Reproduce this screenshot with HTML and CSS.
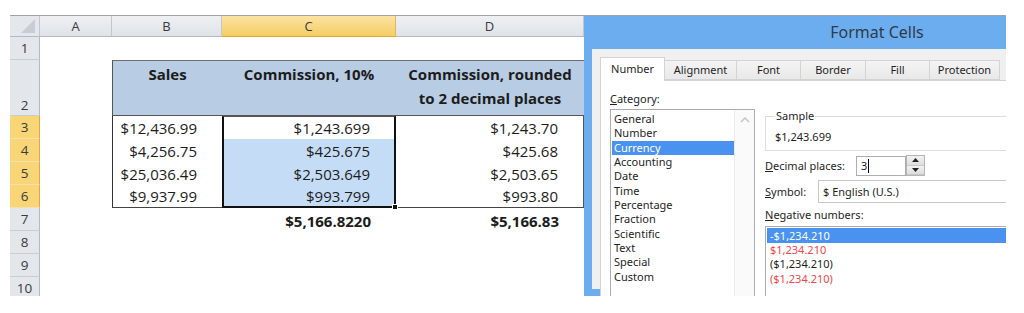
FILE: index.html
```html
<!DOCTYPE html>
<html lang="en">
<head>
    <meta charset="UTF-8">
    <title>Commission - Format Cells</title>
    <link rel="stylesheet" href="styles.css">
</head>
<body>
    <div class="shot">
        <div class="sheet">
            <div class="corner">
                <svg width="16" height="16" viewBox="0 0 16 16"><polygon points="15,1 15,15 1,15" fill="#c9cdd3"/></svg>
            </div>
            <div class="colhead">A</div>
            <div class="colhead">B</div>
            <div class="colhead colhead-on">C</div>
            <div class="colhead">D</div>

            <div class="rowhead">1</div>
            <div class="cell"></div><div class="cell"></div><div class="cell"></div><div class="cell"></div>

            <div class="rowhead rowhead-tall">2</div>
            <div class="cell"></div>
            <div class="cell th th-first">Sales</div>
            <div class="cell th">Commission, 10%</div>
            <div class="cell th">Commission, rounded<br>to 2 decimal places</div>

            <div class="rowhead rowhead-on">3</div>
            <div class="cell"></div>
            <div class="cell num col-b">$12,436.99</div>
            <div class="cell num col-c sel-top">$1,243.699</div>
            <div class="cell num col-d">$1,243.70</div>

            <div class="rowhead rowhead-on">4</div>
            <div class="cell"></div>
            <div class="cell num col-b">$4,256.75</div>
            <div class="cell num col-c picked">$425.675</div>
            <div class="cell num col-d">$425.68</div>

            <div class="rowhead rowhead-on">5</div>
            <div class="cell"></div>
            <div class="cell num col-b">$25,036.49</div>
            <div class="cell num col-c picked">$2,503.649</div>
            <div class="cell num col-d">$2,503.65</div>

            <div class="rowhead rowhead-on">6</div>
            <div class="cell"></div>
            <div class="cell num col-b last">$9,937.99</div>
            <div class="cell num col-c picked sel-bottom">$993.799<span class="handle"></span></div>
            <div class="cell num col-d last">$993.80</div>

            <div class="rowhead">7</div>
            <div class="cell"></div><div class="cell"></div>
            <div class="cell num total">$5,166.8220</div>
            <div class="cell num total">$5,166.83</div>

            <div class="rowhead">8</div>
            <div class="cell"></div><div class="cell"></div><div class="cell"></div><div class="cell"></div>
            <div class="rowhead">9</div>
            <div class="cell"></div><div class="cell"></div><div class="cell"></div><div class="cell"></div>
            <div class="rowhead">10</div>
            <div class="cell"></div><div class="cell"></div><div class="cell"></div><div class="cell"></div>
        </div>

        <div class="dialog">
            <div class="titlebar">Format Cells</div>
            <div class="frame">
                <div class="tabs">
                    <div class="tab tab-active">Number</div>
                    <div class="tab tab-align">Alignment</div>
                    <div class="tab tab-font">Font</div>
                    <div class="tab tab-border">Border</div>
                    <div class="tab tab-fill">Fill</div>
                    <div class="tab tab-prot">Protection</div>
                </div>
                <div class="panel">
                    <div class="left">
                        <div class="label"><u>C</u>ategory:</div>
                        <div class="listbox">
                            <ul class="items">
                                <li>General</li>
                                <li>Number</li>
                                <li class="chosen">Currency</li>
                                <li>Accounting</li>
                                <li>Date</li>
                                <li>Time</li>
                                <li>Percentage</li>
                                <li>Fraction</li>
                                <li>Scientific</li>
                                <li>Text</li>
                                <li>Special</li>
                                <li>Custom</li>
                            </ul>
                            <div class="scrollbar">
                                <svg width="10" height="6" viewBox="0 0 10 6"><polyline points="1,5 5,1 9,5" fill="none" stroke="#c2c2c2" stroke-width="1.4"/></svg>
                            </div>
                        </div>
                    </div>
                    <div class="right">
                        <fieldset class="sample">
                            <legend>Sample</legend>
                            <div class="sample-value">$1,243.699</div>
                        </fieldset>
                        <div class="field">
                            <span class="field-label"><u>D</u>ecimal places:</span>
                            <div class="input">3<span class="caret"></span></div>
                            <div class="spin">
                                <div class="spin-btn"><svg width="7" height="4" viewBox="0 0 7 4"><polygon points="0,4 3.5,0 7,4" fill="#222"/></svg></div>
                                <div class="spin-btn"><svg width="7" height="4" viewBox="0 0 7 4"><polygon points="0,0 7,0 3.5,4" fill="#222"/></svg></div>
                            </div>
                        </div>
                        <div class="field field-symbol">
                            <span class="field-label field-label-short"><u>S</u>ymbol:</span>
                            <div class="combo">$ English (U.S.)</div>
                        </div>
                        <div class="label label-neg"><u>N</u>egative numbers:</div>
                        <ul class="neglist">
                            <li class="chosen">-$1,234.210</li>
                            <li class="red">$1,234.210</li>
                            <li>($1,234.210)</li>
                            <li class="red">($1,234.210)</li>
                        </ul>
                    </div>
                </div>
            </div>
        </div>
    </div>
</body>
</html>
```

FILE: styles.css
```css
* {
    box-sizing: border-box;
}
body {
    margin: 0;
    background: #ffffff;
}
.shot {
    display: flex;
    margin: 15px 0 0 10px;
    width: 996px;
    height: 281px;
    overflow: hidden;
    border-top: 1px solid #a3a3a3;
}

/* spreadsheet */
.sheet {
    display: grid;
    grid-template-columns: 30px 72px 110px 174px 188px;
    grid-template-rows: 21px 23px 56px repeat(8, 23px);
    flex-shrink: 0;
    width: 574px;
    font-family: "Open Sans", sans-serif;
    color: #1c1c1c;
}
.corner {
    display: flex;
    align-items: flex-end;
    justify-content: flex-end;
    padding: 0 3px 2px 0;
    background: #e4e7eb;
    border-right: 1px solid #c3c8cf;
    border-bottom: 1px solid #b3bac3;
}
.colhead {
    display: flex;
    align-items: center;
    justify-content: center;
    font-size: 13px;
    color: #3a3a3a;
    background: linear-gradient(#eef0f3, #dfe3e8);
    border-right: 1px solid #c3c8cf;
    border-bottom: 1px solid #b3bac3;
}
.colhead-on {
    background: linear-gradient(#fbe3a3, #f6cd63);
    border-right-color: #e2b857;
    border-bottom: 1px solid #e2a63a;
}
.rowhead {
    display: flex;
    align-items: center;
    justify-content: center;
    font-size: 13.5px;
    color: #3a3a3a;
    background: #e3e7ec;
    border-right: 1px solid #b3bac3;
    border-bottom: 1px solid #c8cdd4;
}
.rowhead-tall {
    align-items: flex-end;
    padding-bottom: 1px;
}
.rowhead-on {
    background: #f8d577;
    border-bottom-color: #f3e1a8;
    border-right-color: #e2a63a;
}
.cell {
    display: flex;
    align-items: center;
    font-size: 15px;
    line-height: 22px;
    white-space: nowrap;
}
.th {
    align-items: flex-start;
    justify-content: center;
    text-align: center;
    font-weight: bold;
    line-height: 24px;
    padding-top: 1px;
    background: #b8cce4;
    border-top: 1px solid #6e6e6e;
    border-bottom: 1px solid #555555;
}
.th-first {
    border-left: 1px solid #555555;
}
.num {
    justify-content: flex-end;
    padding-right: 25px;
}
.col-b {
    border-left: 1px solid #333333;
}
.col-c {
    position: relative;
    padding-right: 24px;
    border-left: 2px solid #111111;
    border-right: 2px solid #111111;
}
.col-d {
    border-right: 1px solid #555555;
}
.sel-top {
    border-top: 1px solid #555555;
}
.picked {
    background: #c5dcf7;
}
.last {
    border-bottom: 1px solid #444444;
}
.sel-bottom {
    border-bottom: 2px solid #111111;
}
.handle {
    position: absolute;
    right: -4px;
    bottom: -4px;
    width: 6px;
    height: 6px;
    background: #111111;
    border: 1px solid #ffffff;
}
.total {
    font-weight: bold;
    padding-top: 3px;
}

/* format cells dialog */
.dialog {
    flex-shrink: 0;
    width: 586px;
    padding-left: 8px;
    background: #6cadf0;
    font-family: "Noto Sans", sans-serif;
    font-size: 11px;
    color: #1e1e1e;
}
.titlebar {
    height: 33px;
    line-height: 33px;
    text-align: center;
    font-size: 16px;
    color: #2f3b48;
    padding-right: 8px;
}
.frame {
    height: 240px;
    background: #f0f0f0;
    padding: 8px 0 0 8px;
}
.tabs {
    display: flex;
    align-items: flex-end;
    height: 23px;
    position: relative;
    z-index: 1;
}
.tab {
    height: 20px;
    line-height: 18px;
    text-align: center;
    background: linear-gradient(#f4f4f4, #e8e8e8);
    border: 1px solid #d3d3d3;
    border-left: none;
}
.tab-active {
    height: 24px;
    line-height: 22px;
    margin-bottom: -1px;
    background: #ffffff;
    border-left: 1px solid #d3d3d3;
    border-bottom: none;
    width: 65px;
}
.tab-align { width: 72px; }
.tab-font { width: 64px; }
.tab-border { width: 65px; }
.tab-fill { width: 64px; }
.tab-prot { width: 70px; }
.panel {
    display: flex;
    gap: 10px;
    height: 220px;
    background: #ffffff;
    border: 1px solid #d3d3d3;
    padding: 9px 0 0 9px;
}
.left {
    width: 145px;
    flex-shrink: 0;
}
.label {
    line-height: 18px;
    margin-bottom: 1px;
}
.listbox {
    display: flex;
    height: 200px;
    border: 1px solid #abadb3;
}
.items {
    flex: 1;
    list-style: none;
    margin: 0;
    padding: 2px 0 0 1px;
}
.items li {
    line-height: 14.33px;
    padding-left: 2px;
}
.chosen {
    background: #4a92f0;
    color: #ffffff;
}
.scrollbar {
    width: 20px;
    display: flex;
    justify-content: center;
    padding-top: 7px;
    background: #fafafa;
    border-left: 1px solid #ececec;
}
.right {
    width: 400px;
    flex-shrink: 0;
    padding-top: 18px;
}
.sample {
    margin: 0;
    padding: 0 10px 4px 9px;
    border: 1px solid #dcdcdc;
    height: 43px;
}
.sample legend {
    padding: 0 1px;
    line-height: 16px;
}
.sample-value {
    margin-top: 5px;
    line-height: 16px;
    color: #222222;
}
.field {
    display: flex;
    align-items: center;
    margin-top: 4px;
    height: 21px;
}
.field-label {
    width: 91px;
    flex-shrink: 0;
}
.field-label-short {
    width: 53px;
}
.input {
    width: 50px;
    height: 20px;
    line-height: 18px;
    padding-left: 4px;
    border: 1px solid #abadb3;
    background: #ffffff;
    display: flex;
    align-items: center;
}
.caret {
    display: inline-block;
    width: 1px;
    height: 14px;
    margin-left: 1px;
    background: #000000;
}
.spin {
    display: flex;
    flex-direction: column;
    width: 19px;
    height: 21px;
    border: 1px solid #b5b5b5;
    background: #e6e6e6;
}
.spin-btn {
    flex: 1;
    display: flex;
    align-items: center;
    justify-content: center;
    border-bottom: 1px solid #c8c8c8;
    background: linear-gradient(#f2f2f2, #dddddd);
}
.field-symbol {
    margin-top: 4px;
    height: 23px;
}
.combo {
    flex: 1;
    height: 23px;
    line-height: 21px;
    padding-left: 4px;
    border: 1px solid #c9c9c9;
    background: #ffffff;
}
.label-neg {
    margin-top: 3px;
    margin-bottom: 2px;
}
.neglist {
    list-style: none;
    margin: 0;
    padding: 1px 0 0 1px;
    height: 80px;
    border: 1px solid #abadb3;
}
.neglist li {
    line-height: 14.33px;
    padding-left: 3px;
}
.neglist .chosen {
    line-height: 15px;
}
.red {
    color: #f04848;
}
```
